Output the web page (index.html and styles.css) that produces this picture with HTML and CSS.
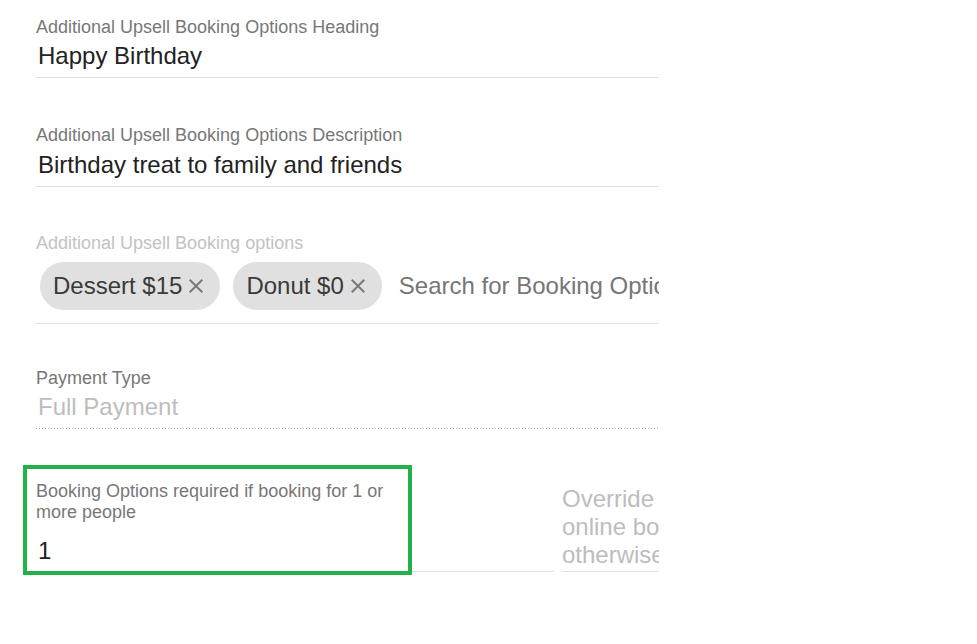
FILE: index.html
```html
<!DOCTYPE html>
<html>
<head>
<meta charset="utf-8">
<link rel="stylesheet" href="styles.css">
</head>
<body>
<div class="page">
  <div class="form">
    <div class="field f1">
      <div class="label">Additional Upsell Booking Options Heading</div>
      <div class="value">Happy Birthday</div>
    </div>
    <div class="field f2">
      <div class="label">Additional Upsell Booking Options Description</div>
      <div class="value value-low">Birthday treat to family and friends</div>
    </div>
    <div class="field f3">
      <div class="label label-light">Additional Upsell Booking options</div>
      <div class="chips">
        <span class="chip">Dessert $15<svg class="chip-x" viewBox="0 0 24 24" width="24" height="24"><path d="M19 6.41L17.59 5 12 10.59 6.41 5 5 6.41 10.59 12 5 17.59 6.41 19 12 13.41 17.59 19 19 17.59 13.41 12z" fill="#7a7a7a"/></svg></span>
        <span class="chip">Donut $0<svg class="chip-x" viewBox="0 0 24 24" width="24" height="24"><path d="M19 6.41L17.59 5 12 10.59 6.41 5 5 6.41 10.59 12 5 17.59 6.41 19 12 13.41 17.59 19 19 17.59 13.41 12z" fill="#7a7a7a"/></svg></span>
        <span class="search">Search for Booking Options</span>
      </div>
    </div>
    <div class="field f4 disabled">
      <div class="label">Payment Type</div>
      <div class="value value-disabled">Full Payment</div>
    </div>
    <div class="row">
      <div class="field f5">
        <div class="label label-wrap">Booking Options required if booking for 1 or more people</div>
        <div class="value value-num">1</div>
      </div>
      <div class="field f6">
        <div class="multi">Override minimum<br>online booking<br>otherwise default</div>
      </div>
    </div>
  </div>
  <div class="highlight"></div>
</div>
</body>
</html>
```
FILE: styles.css
```css
html, body {
  margin: 0;
  padding: 0;
  background: #ffffff;
}

body {
  font-family: "Liberation Sans", Arial, sans-serif;
  color: #212121;
}

.page {
  position: relative;
  width: 977px;
  height: 644px;
}

.form {
  margin-left: 36px;
  width: 623px;
  overflow: hidden;
  padding-top: 17px;
}

.field {
  border-bottom: 1px solid #e0e0e0;
}

.f2 { margin-top: 47px; }
.f3 { margin-top: 46px; }
.f4 { margin-top: 44px; }

.label {
  font-size: 18px;
  line-height: 21px;
  color: #777777;
  white-space: nowrap;
}

.label-light {
  color: #c2c2c2;
}

.value {
  font-size: 24px;
  line-height: 36px;
  height: 36px;
  padding-left: 2px;
  padding-bottom: 3px;
  color: #222222;
  white-space: nowrap;
}

.value-low {
  margin-top: 1px;
  padding-bottom: 3px;
}

.value-disabled {
  color: #bdbdbd;
  padding-bottom: 3px;
}

.disabled {
  border-bottom: none;
  padding-bottom: 1px;
  background-image: repeating-linear-gradient(to right, #a9a9a9 0, #a9a9a9 1px, transparent 1px, transparent 3px);
  background-size: 100% 1px;
  background-repeat: no-repeat;
  background-position: left bottom;
}

.chips {
  display: flex;
  align-items: center;
  margin-top: 8px;
  padding-left: 4px;
  padding-bottom: 13px;
  white-space: nowrap;
}

.chip {
  display: inline-flex;
  align-items: center;
  flex: 0 0 auto;
  height: 48px;
  border-radius: 24px;
  background: #e0e0e0;
  padding: 0 12px 0 13px;
  margin-right: 13px;
  font-size: 24px;
  color: #3a3a3a;
}

.chip-x {
  display: block;
  margin-left: 2px;
}

.chip:nth-child(2) {
  margin-right: 17px;
}

.search {
  font-size: 24px;
  color: #767676;
  flex: 0 0 auto;
}

.row {
  display: flex;
  align-items: flex-end;
  gap: 8px;
  margin-top: 51px;
  width: 900px;
}

.f5 {
  flex: 0 0 518px;
}

.label-wrap {
  white-space: normal;
  max-width: 370px;
  line-height: 21px;
  padding-top: 1px;
}

.value-num {
  margin-top: 10px;
  padding-bottom: 2px;
}

.f6 {
  flex: 0 0 240px;
  padding-bottom: 2px;
}

.multi {
  font-size: 24px;
  line-height: 28px;
  color: #bdbdbd;
  white-space: nowrap;
}

.highlight {
  position: absolute;
  left: 23px;
  top: 465px;
  width: 381px;
  height: 102px;
  border: 4px solid #22b14c;
}
```
